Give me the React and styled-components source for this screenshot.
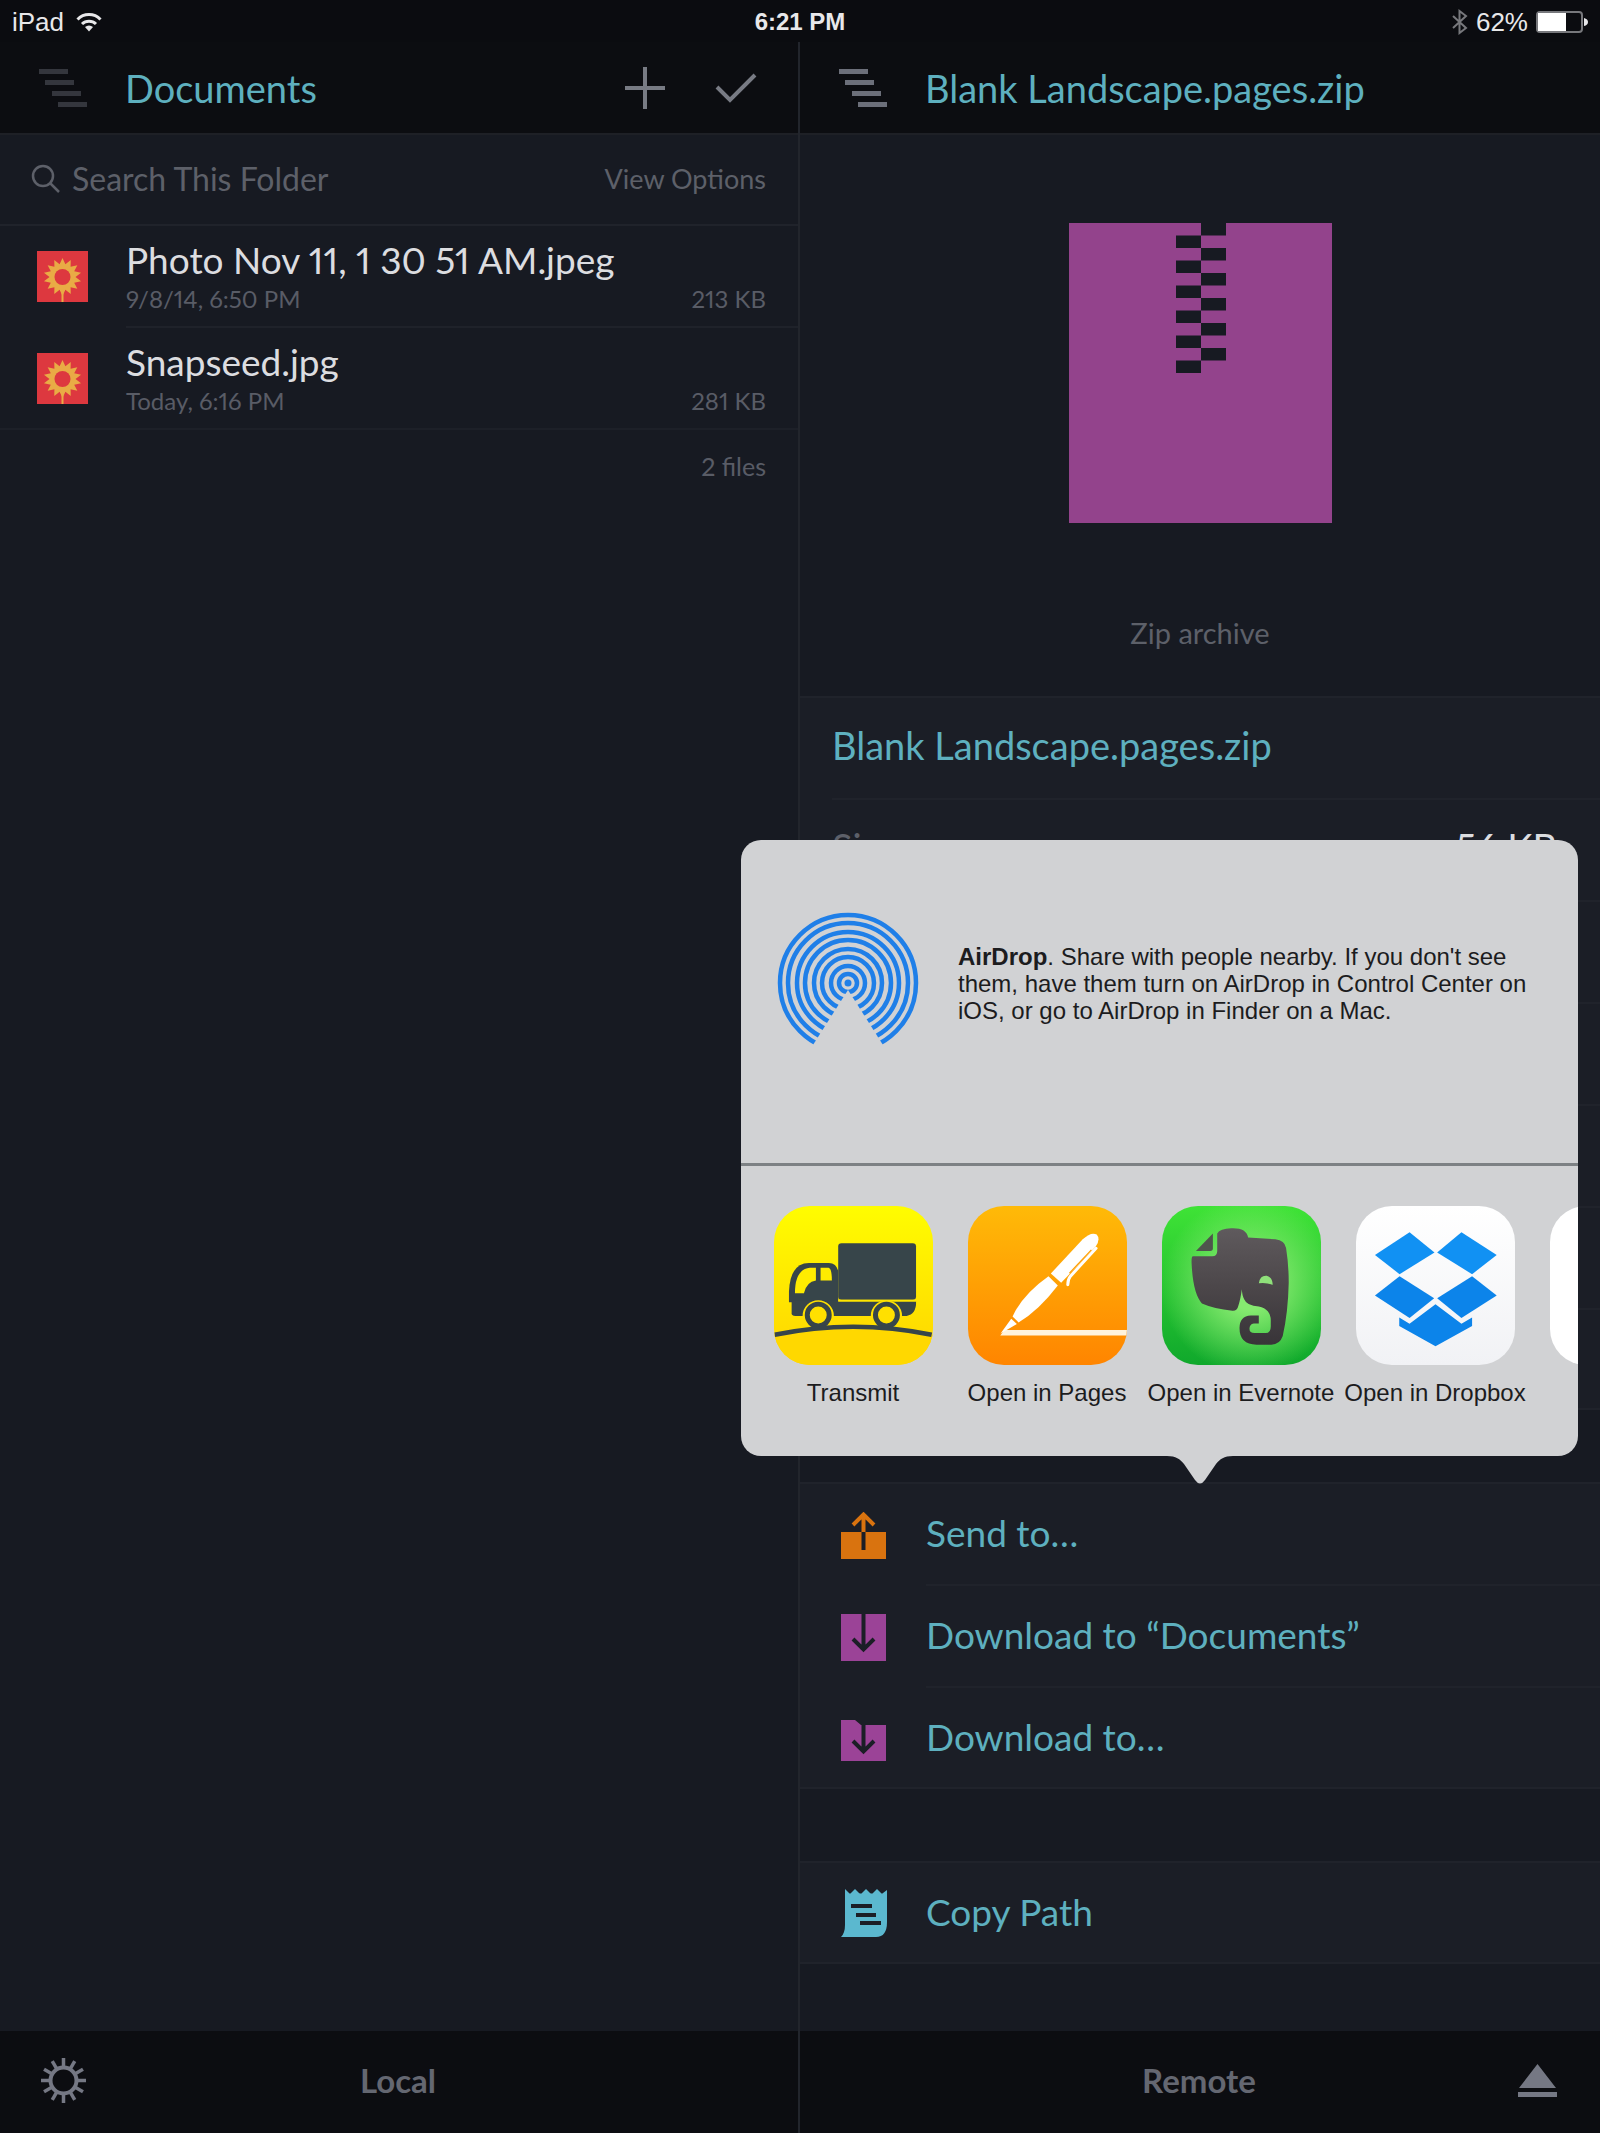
import styled, { createGlobalStyle } from 'styled-components';

const GlobalStyle = createGlobalStyle`
  * {
    box-sizing: border-box;
  }

  body {
    margin: 0;
    background: #171a22;
    color: #d9dadd;
    font-family: Lato, 'Open Sans', sans-serif;
    font-variant-numeric: proportional-nums;
  }

  button {
    border: 0;
    padding: 0;
    background: none;
    color: inherit;
    font: inherit;
    cursor: pointer;
  }

  a {
    color: inherit;
    text-decoration: none;
  }

  h1, h2, p, ul, dl, dt, dd {
    margin: 0;
    padding: 0;
    font: inherit;
    list-style: none;
  }

  svg {
    display: block;
    flex: none;
  }
`;

const Screen = styled.div`
  display: flex;
  flex-direction: column;
  min-height: 100vh;
`;

const StatusBar = styled.div`
  display: grid;
  grid-template-columns: 1fr auto 1fr;
  align-items: center;
  height: 42px;
  padding: 2px 12px 0;
  background: #0b0c10;
  color: #e8e8ea;
  font-family: 'Liberation Sans', Arial, sans-serif;
  font-size: 26px;
`;

const StatusGroup = styled.div`
  display: flex;
  align-items: center;
  justify-content: ${({ $end }) => ($end ? 'flex-end' : 'flex-start')};
  gap: ${({ $end }) => ($end ? '8px' : '12px')};
`;

const Clock = styled.div`
  font-size: 24px;
  font-weight: 700;
`;

const Panes = styled.main`
  display: grid;
  grid-template-columns: 1fr 1fr;
  flex: 1;
`;

const Pane = styled.section`
  display: flex;
  flex-direction: column;
  min-width: 0;
  border-right: ${({ $divided }) => ($divided ? '2px solid #22252c' : '0')};
`;

const Header = styled.header`
  display: flex;
  align-items: center;
  height: 93px;
  padding: 0 41px 0 39px;
  border-bottom: 2px solid #1e2026;
  background: #0c0d11;
  color: #787b84;
`;

const Title = styled.h1`
  flex: 1;
  margin-left: 38px;
  color: #5eb0bf;
  font-size: 38px;
  line-height: 44px;
`;

const HeaderActions = styled.div`
  display: flex;
  align-items: center;
  gap: 50px;
`;

const SearchRow = styled.div`
  display: flex;
  align-items: center;
  height: 91px;
  padding: 0 32px 2px 31px;
  border-bottom: 2px solid #20232b;
  color: #5d6069;
`;

const SearchLabel = styled.label`
  display: flex;
  flex: 1;
  align-items: center;
  gap: 12px;
`;

const SearchInput = styled.input`
  flex: 1;
  min-width: 0;
  padding: 0;
  border: 0;
  outline: 0;
  background: none;
  color: inherit;
  font: inherit;
  font-size: 32px;

  &::placeholder {
    color: #5d6069;
    opacity: 1;
  }
`;

const ViewOptions = styled.button`
  font-size: 27px;
`;

const FileRow = styled.li`
  display: flex;
  padding-left: 37px;

  &:last-child {
    border-bottom: 2px solid #1d2028;
  }
`;

const FileIconBox = styled.div`
  width: 89px;
  padding-top: 25px;
`;

const FileLink = styled.a`
  flex: 1;
  padding: 11px 32px 11px 0;
  border-bottom: ${({ $last }) => ($last ? '0' : '2px solid #1f222a')};
`;

const FileName = styled.div`
  color: #dcdde0;
  font-size: 37px;
  line-height: 46px;
`;

const FileMeta = styled.div`
  display: flex;
  justify-content: space-between;
  color: #595c66;
  font-size: 24px;
  line-height: 32px;
`;

const FileCount = styled.p`
  padding: 20px 32px;
  color: #595c66;
  font-size: 25px;
  line-height: 32px;
  text-align: right;
`;

const Preview = styled.figure`
  display: flex;
  flex-direction: column;
  align-items: center;
  gap: 94px;
  margin: 0;
  padding: 88px 0 47px;
`;

const PreviewCaption = styled.figcaption`
  color: #5d6069;
  font-size: 29px;
  line-height: 32px;
`;

const Group = styled.div`
  position: relative;
  margin-bottom: ${({ $gap }) => $gap || '0'};
  border-top: 2px solid #20232b;
  border-bottom: 2px solid #20232b;
  background: #1b1e26;
`;

const InfoRow = styled.div`
  display: flex;
  align-items: center;
  justify-content: space-between;
  height: ${({ $last }) => ($last ? '98px' : '102px')};
  margin-left: 32px;
  padding: 0 43px 6px 0;
  border-bottom: ${({ $last }) => ($last ? '0' : '2px solid #20232b')};
  color: ${({ $accent }) => ($accent ? '#5eb0bf' : '#5d6069')};
  font-size: 38px;
`;

const InfoValue = styled.dd`
  color: #dcdde0;
`;

const ActionButton = styled.button`
  display: flex;
  align-items: center;
  width: 100%;
  padding-left: 41px;
  color: #5eb0bf;
  font-size: 37px;
  text-align: left;
`;

const ActionLabel = styled.span`
  display: flex;
  flex: 1;
  align-items: center;
  height: ${({ $last }) => ($last ? '99px' : '102px')};
  margin-left: 39px;
  padding-bottom: 3px;
  border-bottom: ${({ $last }) => ($last ? '0' : '2px solid #20232b')};
`;

const Footer = styled.footer`
  display: grid;
  grid-template-columns: 1fr auto 1fr;
  align-items: center;
  height: 102px;
  margin-top: auto;
  padding: 0 43px 4px 41px;
  background: #0c0d11;
  color: #757884;
`;

const FooterTitle = styled.h2`
  grid-column: 2;
  color: #646771;
  font-size: 33px;
  font-weight: 700;
`;

const FooterButton = styled.button`
  grid-column: ${({ $end }) => ($end ? 3 : 1)};
  justify-self: ${({ $end }) => ($end ? 'end' : 'start')};
`;

const Popover = styled.div`
  position: absolute;
  right: 22px;
  bottom: calc(100% + 28px);
  z-index: 2;
  width: 837px;
  border-radius: 20px;
  background: #d1d2d4;
  color: #111;
  font-family: 'Liberation Sans', Arial, sans-serif;
`;

const PopoverArrow = styled.svg`
  position: absolute;
  top: 100%;
  right: 345px;
`;

const AirDrop = styled.div`
  display: flex;
  align-items: center;
  gap: 39px;
  padding: 72px 36px 109px;
  border-bottom: 3px solid #7d8184;
`;

const AirDropText = styled.p`
  font-size: 24px;
  line-height: 27px;
  color: #1c1c1e;
  white-space: nowrap;
`;

const Apps = styled.ul`
  display: flex;
  overflow: hidden;
  padding: 40px 0 49px 15px;
  border-radius: 0 0 20px 20px;
`;

const AppItem = styled.li`
  flex: none;
  width: 194px;
`;

const AppButton = styled.button`
  display: flex;
  flex-direction: column;
  align-items: center;
  width: 100%;
  color: #1c1c1e;
  font-size: 24px;
  line-height: 28px;
  white-space: nowrap;
`;

const AppIcon = styled.span`
  display: block;
  overflow: hidden;
  width: 159px;
  height: 159px;
  margin-bottom: 14px;
  border-radius: 36px;
  background: ${({ $bg }) => $bg};
`;

function WifiIcon() {
  return (
    <svg width="26" height="20" viewBox="0 0 26 20" fill="none" stroke="#e8e8ea" strokeWidth="3">
      <path d="M1.500 7.500a16 16 0 0 1 23 0" />
      <path d="M6 12a10 10 0 0 1 14 0" />
      <path d="M13 19.500l-4-4.500a6 6 0 0 1 8 0z" fill="#e8e8ea" stroke="none" />
    </svg>
  );
}

function BluetoothIcon() {
  return (
    <svg width="17" height="26" viewBox="0 0 17 26" fill="none" stroke="#77787c" strokeWidth="2">
      <path d="M2 7l13 12-6.500 5V2L15 7 2 19" />
    </svg>
  );
}

function BatteryIcon() {
  return (
    <svg width="52" height="22" viewBox="0 0 52 22">
      <rect x="1" y="1" width="45" height="20" rx="3" fill="none" stroke="#77787c" strokeWidth="2" />
      <path d="M2 2h28v18H2z" fill="#fff" />
      <path d="M48 7q4 1 4 4t-4 4z" fill="#e8e8ea" />
    </svg>
  );
}

function PathIcon({ color }) {
  return (
    <svg width="48" height="38" viewBox="0 0 48 38" fill={color}>
      <path d="M0 0h29v5H0zM6 11h29v5H6zM13 22h29v5H13zM19 33h29v5H19z" />
    </svg>
  );
}

function PlusIcon() {
  return (
    <svg width="40" height="42" viewBox="0 0 40 42" stroke="currentColor" strokeWidth="4">
      <path d="M20 0v42M0 21h40" />
    </svg>
  );
}

function CheckIcon() {
  return (
    <svg width="42" height="30" viewBox="0 0 42 30" fill="none" stroke="currentColor" strokeWidth="4">
      <path d="M2 14l13 13L40 2" />
    </svg>
  );
}

function SearchIcon() {
  return (
    <svg width="29" height="29" viewBox="0 0 29 29" fill="none" stroke="currentColor" strokeWidth="2.500">
      <circle cx="12" cy="12" r="10" />
      <path d="M19 19l9 9" />
    </svg>
  );
}

const petals = Array.from({ length: 28 }, (_, i) => {
  const radius = i % 2 ? 13 : 19;
  const angle = (i * Math.PI) / 14;
  return `${25.5 + radius * Math.sin(angle)},${26 - radius * Math.cos(angle)}`;
}).join(' ');

function ImageFileIcon() {
  return (
    <svg width="51" height="51" viewBox="0 0 51 51">
      <path d="M0 0h51v51H0z" fill="#dd383f" />
      <polygon points={petals} fill="#e9ab45" />
      <circle cx="25.500" cy="26" r="8" fill="#dd383f" />
      <path d="M24.500 40h2v11h-2z" fill="#e9ab45" />
    </svg>
  );
}

function ZipPreview() {
  return (
    <svg width="263" height="300" viewBox="0 0 263 300" role="img" aria-label="Zip archive">
      <path d="M0 0h263v300H0z" fill="#93438c" />
      {Array.from({ length: 12 }, (_, i) => (
        <rect
          key={i}
          x={i % 2 ? 107 : 132}
          y={i * 12.5}
          width="25"
          height="12.500"
          fill="#171a22"
        />
      ))}
    </svg>
  );
}

function SendIcon() {
  return (
    <svg width="46" height="47" viewBox="0 0 46 47" fill="none" strokeWidth="4">
      <path d="M0 20h45v27H0z" fill="#d9730f" />
      <path d="M22.500 3v17M12 13L22.500 2.500 33 13" stroke="#d9730f" />
      <path d="M22.500 20v18" stroke="#1b1e26" />
    </svg>
  );
}

function DownloadIcon() {
  return (
    <svg width="46" height="47" viewBox="0 0 46 47" fill="none">
      <path d="M0 0h45v47H0z" fill="#9b4397" />
      <path d="M22.500 0v36M12 25l10.500 10.500L33 25" stroke="#1b1e26" strokeWidth="4" />
    </svg>
  );
}

function DownloadFolderIcon() {
  return (
    <svg width="46" height="47" viewBox="0 0 46 47" fill="none">
      <path d="M0 6h14l6 5h25v36H0z" fill="#9b4397" />
      <path d="M22.500 8v30M12 27l10.500 10.500L33 27" stroke="#1b1e26" strokeWidth="4" />
    </svg>
  );
}

function CopyPathIcon() {
  return (
    <svg width="46" height="48" viewBox="0 0 46 48">
      <path
        d="M4 0l4 4q1 1 2 0l4-4 4 4q2 1 3 0l4-4 4 4q2 1 3 0l4-4 4 4q1 1 2 0l4-3v32q0 15-11 15H0q4-4 4-12z"
        fill="#5bb8cf"
      />
      <path d="M10 15h21v4H10zM15 24h20v4H15zM19 32h21v4H19z" fill="#1b1e26" />
    </svg>
  );
}

function GearIcon() {
  return (
    <svg width="45" height="45" viewBox="0 0 45 45" fill="none" stroke="currentColor">
      <circle cx="22.500" cy="22.500" r="13" strokeWidth="4" />
      {Array.from({ length: 12 }, (_, i) => (
        <path
          key={i}
          d="M22.500 0v9"
          strokeWidth="3.500"
          transform={`rotate(${i * 30} 22.500 22.500)`}
        />
      ))}
    </svg>
  );
}

function EjectIcon() {
  return (
    <svg width="39" height="33" viewBox="0 0 39 33" fill="currentColor">
      <path d="M19.500 0L38 24H1zM0 28h39v5H0z" />
    </svg>
  );
}

function AirDropIcon() {
  return (
    <svg width="142" height="142" viewBox="0 0 142 142">
      <mask id="airdrop-wedge">
        <path d="M0 0h142v142H0z" fill="#fff" />
        <path d="M71 78l-42 66h84z" fill="#000" />
      </mask>
      <g mask="url(#airdrop-wedge)" fill="none" stroke="#1f7fe8" strokeWidth="4.500">
        {[9, 17, 26, 34, 43, 51, 60, 68].map((r) => (
          <circle key={r} cx="71" cy="71" r={r} />
        ))}
      </g>
      <circle cx="71" cy="71" r="3.500" fill="#1f7fe8" />
    </svg>
  );
}

function TransmitLogo() {
  return (
    <svg width="159" height="159" viewBox="75 73 478 478">
      <g fill="#37454a">
        <rect x="268" y="185" width="234" height="170" rx="10" />
        <path d="M120 362V330Q124 244 180 244h60q22 0 28 24v94z" />
        <path d="M128 358h374v12q-4 34-36 34H140q-14 0-12-14z" />
      </g>
      <path d="M138 335q0-72 45-76h18v38q-28 4-36 38z" fill="#ffec00" />
      <path d="M215 259h24q10 2 10 38h-34z" fill="#ffec00" />
      <path d="M268 358h234" stroke="#ffe600" strokeWidth="6" />
      <g fill="#ffe000" stroke="#ffe000" strokeWidth="6">
        <circle cx="208" cy="403" r="44" />
        <circle cx="413" cy="403" r="44" />
      </g>
      <g fill="#ffe000" stroke="#37454a" strokeWidth="15">
        <circle cx="208" cy="401" r="33" />
        <circle cx="413" cy="401" r="33" />
      </g>
      <path d="M75 460Q314 412 553 460v91H75z" fill="#ffd800" />
      <path d="M77 460Q314 412 549 460" fill="none" stroke="#37454a" strokeWidth="14" />
    </svg>
  );
}

function PagesLogo() {
  return (
    <svg width="159" height="159" viewBox="655 73 478 478">
      <path d="M752 462l12-16h369v16z" fill="#fff3dc" />
      <g fill="#fff">
        <path d="M753 456l32-44 17 16z" />
        <path d="M789 405q30-66 108-121l28 28q-58 76-118 111z" />
        <path d="M904 276l96-103q26-24 42-14 12 14-3 36L935 304z" />
      </g>
      <path d="M1040 200l-77 84q-8 10-8 26" fill="none" stroke="#fff" strokeWidth="9" strokeLinecap="round" />
      <path d="M1026 205l-66 70" stroke="#ff9f05" strokeWidth="4" />
    </svg>
  );
}

function EvernoteLogo() {
  return (
    <svg width="159" height="159" viewBox="65 73 478 478">
      <defs>
        <linearGradient id="elephant" x1="0" y1="0" x2="0" y2="1">
          <stop offset="0" stopColor="#5f5a5d" />
          <stop offset="0.500" stopColor="#4c474a" />
          <stop offset="1" stopColor="#383438" />
        </linearGradient>
      </defs>
      <path d="M167 208l51-52v44q0 8-8 8z" fill="#4f554d" />
      <path
        d="M158 224h58q15 0 15-15v-53q8-15 42-16 46-2 51 28l82 5q28 3 32 26 8 50 8 105-2 90-18 160-9 26-34 26h-45q-51 0-51-50 0-36 34-38h24v24h-15q-13 2-13 16 0 13 15 13h34q15 0 15-20v-18q0-34-36-42-36-2-44-22-6-10-7-30-4 30-10 48-4 18-18 17-56-6-92-22-27-30-31-120-1-22 4-22z"
        fill="url(#elephant)"
      />
      <path d="M356 305q4-24 24-22 17 4 18 27-20-8-42-5z" fill="#8fe07a" />
    </svg>
  );
}

function DropboxLogo() {
  return (
    <svg width="159" height="159" viewBox="645 73 478 478">
      <g fill="#1191f3">
        <path d="M806 152l75 61-105 65-74-58z" />
        <path d="M962 152l106 68-74 58-105-65z" />
      </g>
      <g fill="#0c84ea">
        <path d="M776 284l104 66-74 60-104-68z" />
        <path d="M994 284l74 58-106 68-73-60z" />
        <path d="M884 368l78 59 32-19v26l-110 61-109-61v-26l31 19z" />
      </g>
    </svg>
  );
}

const files = [
  { name: 'Photo Nov 11, 1 30 51 AM.jpeg', date: '9/8/14, 6:50 PM', size: '213 KB' },
  { name: 'Snapseed.jpg', date: 'Today, 6:16 PM', size: '281 KB' },
];

const actions = [
  { label: 'Send to…', icon: <SendIcon /> },
  { label: 'Download to “Documents”', icon: <DownloadIcon /> },
  { label: 'Download to…', icon: <DownloadFolderIcon /> },
];

const apps = [
  { label: 'Transmit', bg: 'linear-gradient(#fffd00, #ffd400)', logo: <TransmitLogo /> },
  { label: 'Open in Pages', bg: 'linear-gradient(#ffba08, #ff8500)', logo: <PagesLogo /> },
  {
    label: 'Open in Evernote',
    bg: 'radial-gradient(circle at 55% 50%, #86ea70 20%, transparent 75%), linear-gradient(#3fe336, #10a82c)',
    logo: <EvernoteLogo />,
  },
  { label: 'Open in Dropbox', bg: 'linear-gradient(#fff, #f1f2f5)', logo: <DropboxLogo /> },
  { label: '', bg: '#fff', logo: null },
];

function SharePopover() {
  return (
    <Popover role="dialog" aria-label="Share">
      <AirDrop>
        <AirDropIcon />
        <AirDropText>
          <b>AirDrop</b>. Share with people nearby. If you don't see
          <br />
          them, have them turn on AirDrop in Control Center on
          <br />
          iOS, or go to AirDrop in Finder on a Mac.
        </AirDropText>
      </AirDrop>
      <Apps>
        {apps.map((app, i) => (
          <AppItem key={i}>
            <AppButton aria-label={app.label || 'More'}>
              <AppIcon $bg={app.bg}>{app.logo}</AppIcon>
              {app.label}
            </AppButton>
          </AppItem>
        ))}
      </Apps>
      <PopoverArrow width="66" height="28" viewBox="0 0 66 28" fill="#d1d2d4">
        <path d="M0 0C9 0 13 3 17 8l11 16q5 7 10 0L49 8C53 3 57 0 66 0z" />
      </PopoverArrow>
    </Popover>
  );
}

function LocalPane() {
  return (
    <Pane $divided>
      <Header>
        <PathIcon color="#34363d" />
        <Title>Documents</Title>
        <HeaderActions>
          <button aria-label="Add">
            <PlusIcon />
          </button>
          <button aria-label="Select">
            <CheckIcon />
          </button>
        </HeaderActions>
      </Header>

      <SearchRow>
        <SearchLabel>
          <SearchIcon />
          <SearchInput type="text" placeholder="Search This Folder" aria-label="Search This Folder" />
        </SearchLabel>
        <ViewOptions>View Options</ViewOptions>
      </SearchRow>

      <ul>
        {files.map((file, i) => (
          <FileRow key={file.name}>
            <FileIconBox>
              <ImageFileIcon />
            </FileIconBox>
            <FileLink href="#" $last={i === files.length - 1}>
              <FileName>{file.name}</FileName>
              <FileMeta>
                <span>{file.date}</span>
                <span>{file.size}</span>
              </FileMeta>
            </FileLink>
          </FileRow>
        ))}
      </ul>
      <FileCount>2 files</FileCount>

      <Footer>
        <FooterButton aria-label="Settings">
          <GearIcon />
        </FooterButton>
        <FooterTitle>Local</FooterTitle>
      </Footer>
    </Pane>
  );
}

function RemotePane() {
  return (
    <Pane>
      <Header>
        <PathIcon color="#6c6f7a" />
        <Title>Blank Landscape.pages.zip</Title>
      </Header>

      <Preview>
        <ZipPreview />
        <PreviewCaption>Zip archive</PreviewCaption>
      </Preview>

      <Group as="dl" $gap="72px">
        <InfoRow $accent>
          <dt>Blank Landscape.pages.zip</dt>
        </InfoRow>
        <InfoRow>
          <dt>Size</dt>
          <InfoValue>56 KB</InfoValue>
        </InfoRow>
        <InfoRow />
        <InfoRow />
        <InfoRow />
        <InfoRow />
        <InfoRow $last />
      </Group>

      <Group $gap="72px">
        <SharePopover />
        {actions.map((action, i) => (
          <ActionButton key={action.label}>
            {action.icon}
            <ActionLabel $last={i === actions.length - 1}>{action.label}</ActionLabel>
          </ActionButton>
        ))}
      </Group>

      <Group $gap="66px">
        <ActionButton>
          <CopyPathIcon />
          <ActionLabel $last>Copy Path</ActionLabel>
        </ActionButton>
      </Group>

      <Footer>
        <FooterTitle>Remote</FooterTitle>
        <FooterButton $end aria-label="Disconnect">
          <EjectIcon />
        </FooterButton>
      </Footer>
    </Pane>
  );
}

function App() {
  return (
    <>
      <GlobalStyle />
      <Screen>
        <StatusBar>
          <StatusGroup>
            iPad
            <WifiIcon />
          </StatusGroup>
          <Clock>6:21 PM</Clock>
          <StatusGroup $end>
            <BluetoothIcon />
            62%
            <BatteryIcon />
          </StatusGroup>
        </StatusBar>
        <Panes>
          <LocalPane />
          <RemotePane />
        </Panes>
      </Screen>
    </>
  );
}

export default App;
